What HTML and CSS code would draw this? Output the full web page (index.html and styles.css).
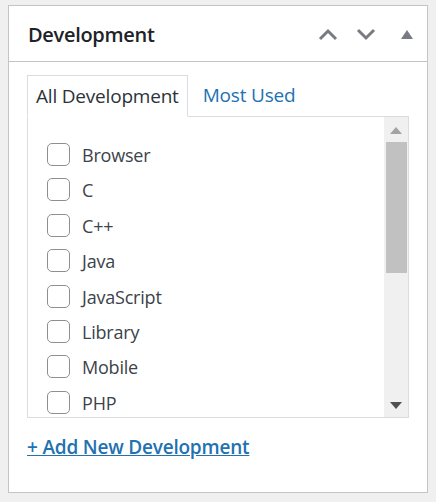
FILE: index.html
```html
<!DOCTYPE html>
<html>
<head>
<meta charset="utf-8">
<link rel="stylesheet" href="styles.css">
</head>
<body>
<div class="postbox">
  <div class="postbox-header">
    <h2 class="title">Development</h2>
    <div class="actions">
      <svg class="icon" width="22" height="14" viewBox="0 0 22 14"><path d="M3 12 L11 4 L19 12" fill="none" stroke="#787c82" stroke-width="3"/></svg>
      <svg class="icon" width="22" height="14" viewBox="0 0 22 14"><path d="M3 3 L11 11 L19 3" fill="none" stroke="#787c82" stroke-width="3"/></svg>
      <svg class="icon tri" width="12" height="10" viewBox="0 0 12 10"><path d="M0 10 L6 1 L12 10 Z" fill="#787c82"/></svg>
    </div>
  </div>
  <div class="inside">
    <div class="tabs">
      <span class="tab active">All Development</span>
      <span class="tab">Most Used</span>
    </div>
    <div class="panel">
      <ul class="list">
        <li><span class="cb"></span>Browser</li>
        <li><span class="cb"></span>C</li>
        <li><span class="cb"></span>C++</li>
        <li><span class="cb"></span>Java</li>
        <li><span class="cb"></span>JavaScript</li>
        <li><span class="cb"></span>Library</li>
        <li><span class="cb"></span>Mobile</li>
        <li><span class="cb"></span>PHP</li>
        <li><span class="cb"></span>Python</li>
      </ul>
      <div class="scrollbar">
        <svg class="arrow" width="12" height="7" viewBox="0 0 12 7"><path d="M0 7 L6 0 L12 7 Z" fill="#a3a3a3"/></svg>
        <div class="thumb"></div>
        <div class="track"></div>
        <svg class="arrow" width="12" height="7" viewBox="0 0 12 7"><path d="M0 0 L6 7 L12 0 Z" fill="#505050"/></svg>
      </div>
    </div>
    <div class="add-row"><a class="add" href="#">+&nbsp;Add New Development</a></div>
  </div>
</div>
</body>
</html>
```
FILE: styles.css
```css
* { box-sizing: border-box; }
html, body { margin: 0; padding: 0; }
body {
  background: #f0f0f1;
  padding: 5px 8px 0 8px;
  font-family: "Open Sans", "Noto Sans", sans-serif;
}
.postbox {
  width: 420px;
  height: 488px;
  background: #fff;
  border: 1px solid #c3c4c7;
}
.postbox-header {
  height: 56px;
  border-bottom: 1px solid #c3c4c7;
  display: flex;
  align-items: center;
  justify-content: space-between;
  padding: 0 14px 0 19px;
}
.title {
  margin: 0;
  font-size: 20px;
  font-weight: 600;
  color: #1d2327;
  letter-spacing: -0.3px;
  line-height: 28px;
  padding-top: 2px;
}
.actions {
  display: flex;
  align-items: center;
  gap: 16px;
}
.icon { display: block; }
.tri { margin-left: 8px; }
.inside {
  padding: 12px 18px 0 18px;
}
.tabs {
  display: flex;
  align-items: flex-end;
  height: 42px;
}
.tab {
  font-size: 19px;
  color: #2271b1;
  padding: 0 8px;
  height: 42px;
  line-height: 40px;
  border: 1px solid transparent;
  letter-spacing: -0.2px;
  white-space: nowrap;
}
.tab.active {
  color: #2c3338;
  border-color: #dcdcde;
  border-bottom-color: #fff;
  background: #fff;
  position: relative;
  z-index: 1;
  margin-bottom: -1px;
}
.tab + .tab { padding-left: 14px; }
.panel {
  height: 302px;
  border: 1px solid #dcdcde;
  display: flex;
  overflow: hidden;
}
.list {
  list-style: none;
  margin: 0;
  padding: 26px 0 0 19px;
  flex: 1;
  overflow: hidden;
}
.list li {
  height: 35.4px;
  display: flex;
  align-items: flex-start;
  font-size: 18px;
  color: #3c434a;
  line-height: 24px;
  letter-spacing: -0.2px;
}
.cb {
  width: 23px;
  height: 23px;
  border: 1px solid #8c8f94;
  border-radius: 5px;
  margin-right: 12px;
  flex: none;
}
.scrollbar {
  width: 24px;
  background: #f0f0f0;
  display: flex;
  flex-direction: column;
  align-items: center;
  padding: 10px 0 8px;
}
.arrow { display: block; flex: none; }
.thumb {
  width: 21px;
  height: 131px;
  background: #c1c1c1;
  margin-top: 8px;
  flex: none;
}
.track { flex: 1; }
.add-row {
  margin-top: 15px;
  font-size: 19px;
  line-height: 28px;
}
.add {
  display: inline-block;
  font-weight: 600;
  color: #2271b1;
  text-decoration: underline;
  letter-spacing: -0.2px;
  white-space: nowrap;
}
```
